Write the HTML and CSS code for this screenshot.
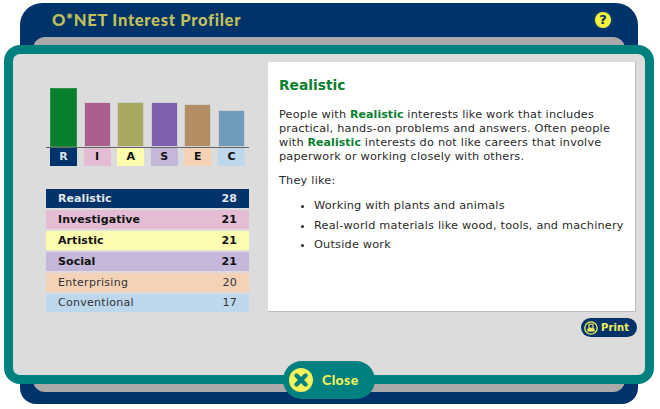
FILE: index.html
```html
<!DOCTYPE html>
<html lang="en">
<head>
<meta charset="utf-8">
<title>O*NET Interest Profiler</title>
<link rel="stylesheet" href="styles.css">
</head>
<body>
<div class="stage">
  <div class="back">
    <header class="topbar">
      <h1 class="app-title">O*NET Interest Profiler</h1>
      <span class="help">?</span>
    </header>
    <div class="back-inner"></div>
  </div>
  <main class="front">
    <div class="columns">
      <section class="left">
        <div class="chart">
          <div class="bars">
            <div class="bar bar-r" style="height:59px"></div>
            <div class="bar bar-i" style="height:45px"></div>
            <div class="bar bar-a" style="height:45px"></div>
            <div class="bar bar-s" style="height:45px"></div>
            <div class="bar bar-e" style="height:43px"></div>
            <div class="bar bar-c" style="height:37px"></div>
          </div>
          <div class="letters">
            <span class="letter row-r">R</span>
            <span class="letter row-i">I</span>
            <span class="letter row-a">A</span>
            <span class="letter row-s">S</span>
            <span class="letter row-e">E</span>
            <span class="letter row-c">C</span>
          </div>
        </div>
        <ul class="scores">
          <li class="score row-r strong"><span>Realistic</span><span>28</span></li>
          <li class="score row-i strong"><span>Investigative</span><span>21</span></li>
          <li class="score row-a strong"><span>Artistic</span><span>21</span></li>
          <li class="score row-s strong"><span>Social</span><span>21</span></li>
          <li class="score row-e"><span>Enterprising</span><span>20</span></li>
          <li class="score row-c"><span>Conventional</span><span>17</span></li>
        </ul>
      </section>
      <article class="detail">
        <h2 class="detail-title">Realistic</h2>
        <p class="copy">People with <b class="hl">Realistic</b> interests like work that includes practical, hands-on problems and answers. Often people with <b class="hl">Realistic</b> interests do not like careers that involve paperwork or working closely with others.</p>
        <p class="copy copy-lead">They like:</p>
        <ul class="likes">
          <li>Working with plants and animals</li>
          <li>Real-world materials like wood, tools, and machinery</li>
          <li>Outside work</li>
        </ul>
      </article>
    </div>
    <div class="actions">
      <button class="print" type="button">
        <svg class="print-icon" viewBox="0 0 14 14" aria-hidden="true">
          <circle cx="7" cy="7" r="6.2" fill="none" stroke="#f4f25a" stroke-width="1.3"/>
          <rect x="5" y="3.2" width="4" height="4" fill="none" stroke="#f4f25a" stroke-width="1.1"/>
          <rect x="3.4" y="7.4" width="7.2" height="3.2" fill="#f4f25a"/>
        </svg>
        <span>Print</span>
      </button>
    </div>
  </main>
  <button class="close" type="button">
    <svg class="close-icon" viewBox="0 0 24 24" aria-hidden="true">
      <circle cx="12" cy="12" r="12" fill="#f4f25a"/>
      <path d="M7.5 7.5 16.5 16.5M16.5 7.5 7.5 16.5" stroke="#00807f" stroke-width="4.4" stroke-linecap="round"/>
    </svg>
    <span>Close</span>
  </button>
</div>
</body>
</html>
```
FILE: styles.css
```css
* { box-sizing: border-box; }
html, body { margin: 0; padding: 0; background: #fff; }
body { font-family: "DejaVu Sans", Verdana, sans-serif; font-size: 11px; color: #222; }
.stage { position: relative; width: 660px; height: 409px; overflow: hidden; }

.back {
  position: absolute; left: 20px; top: 3px; width: 618px; height: 401px;
  background: #00336a; border-radius: 22px 22px 16px 16px;
  display: flex; flex-direction: column;
}
.topbar { height: 34px; flex: none; display: flex; align-items: center; justify-content: space-between; padding: 0 27px 0 32px; }
.app-title { margin: 0; font: 900 16.5px/1 Lato, sans-serif; letter-spacing: .72px; color: #c3c15a; }
.help {
  width: 16px; height: 16px; border-radius: 50%; background: #f4f23c; color: #00336a;
  font: 700 13px/16px "DejaVu Sans", sans-serif; text-align: center;
  box-shadow: 0 0 3px 1px #1a4a78;
}
.back-inner { margin: 0 13px 12px; flex: 1; background: #aaa; border-radius: 12px; }

.front {
  position: absolute; left: 4px; top: 45px; width: 650px; height: 339px;
  background: #dcdcdc; border: 9px solid #00807f; border-radius: 16px;
  padding: 8px 9px 0 33px;
}
.columns { display: flex; justify-content: space-between; }
.left { width: 203px; padding-top: 26px; }
.detail { width: 368px; height: 250px; background: #fff; padding: 14px 11px 0 11px; border-right: 1px solid #bbb; border-bottom: 1px solid #bbb; }

.bars { height: 60px; display: flex; justify-content: space-between; align-items: flex-end; padding: 0 4px; border-bottom: 1px solid #666; }
.bar { width: 27px; outline: 1px solid #cfcfcf; outline-offset: -1px; }
.bar-r { background: #08802b; outline-color: #2f8f4c; }
.bar-i { background: #ab5f8d; }
.bar-a { background: #a8a95e; }
.bar-s { background: #7e60b0; }
.bar-e { background: #b48d64; }
.bar-c { background: #6f9cbc; }
.letters { display: flex; justify-content: space-between; padding: 0 4px; }
.letter { width: 27px; height: 18px; text-align: center; font: 700 11px/18px "DejaVu Sans", sans-serif; color: #111; }

.row-r { background: #00336a; color: #e4e8ee; }
.row-i { background: #e4bcd4; }
.row-a { background: #fdfdb0; }
.row-s { background: #c5b7da; }
.row-e { background: #f3d2b6; }
.row-c { background: #bdd7ec; }
.letter.row-r { color: #dfe6ee; }

.scores { list-style: none; margin: 23px 0 0; padding: 0; display: flex; flex-direction: column; gap: 2px; }
.score { height: 19px; display: flex; justify-content: space-between; align-items: center; padding: 0 12px; font-size: 11px; line-height: 19px; color: #333; letter-spacing: .28px; }
.score.strong { font-weight: 700; color: #111; letter-spacing: .08px; }
.score.row-r { color: #e4e8ee; }
.score.row-c { height: 18.5px; margin-top: -.5px; }

.detail-title { margin: 0 0 14px; font: 600 13.8px/18px "DejaVu Sans", sans-serif; color: #0a7f30; }
.copy { margin: 0 0 10px; font-size: 11.3px; letter-spacing: .2px; line-height: 14px; color: #2a2a2a; }
.copy-lead { margin-bottom: 11px; }
.hl { color: #0a7f30; font-size: 11px; letter-spacing: .05px; }
.likes { margin: 0; padding: 0 0 0 35px; font-size: 11.3px; letter-spacing: .2px; line-height: 14px; color: #2a2a2a; }
.likes li { margin-bottom: 5.7px; white-space: nowrap; }

.actions { display: flex; justify-content: flex-end; padding-top: 6px; margin-right: -1px; }
.print {
  width: 56px; height: 19px; border: 0; border-radius: 10px; background: #00336a; color: #f4f25a;
  display: flex; align-items: center; gap: 3px; padding: 0 0 0 3px;
  font: 700 10px/1 "DejaVu Sans", sans-serif; letter-spacing: .1px;
}
.print-icon { width: 14px; height: 14px; flex: none; }

.close {
  position: absolute; left: 283px; top: 361px; width: 92px; height: 38px;
  border: 0; border-radius: 19px; background: #00807f; color: #f4f25a;
  display: flex; align-items: center; gap: 9px; padding: 0 0 0 6px;
  font: 900 14px/1 Lato, sans-serif; letter-spacing: .4px;
}
.close-icon { width: 24px; height: 24px; flex: none; }
```
